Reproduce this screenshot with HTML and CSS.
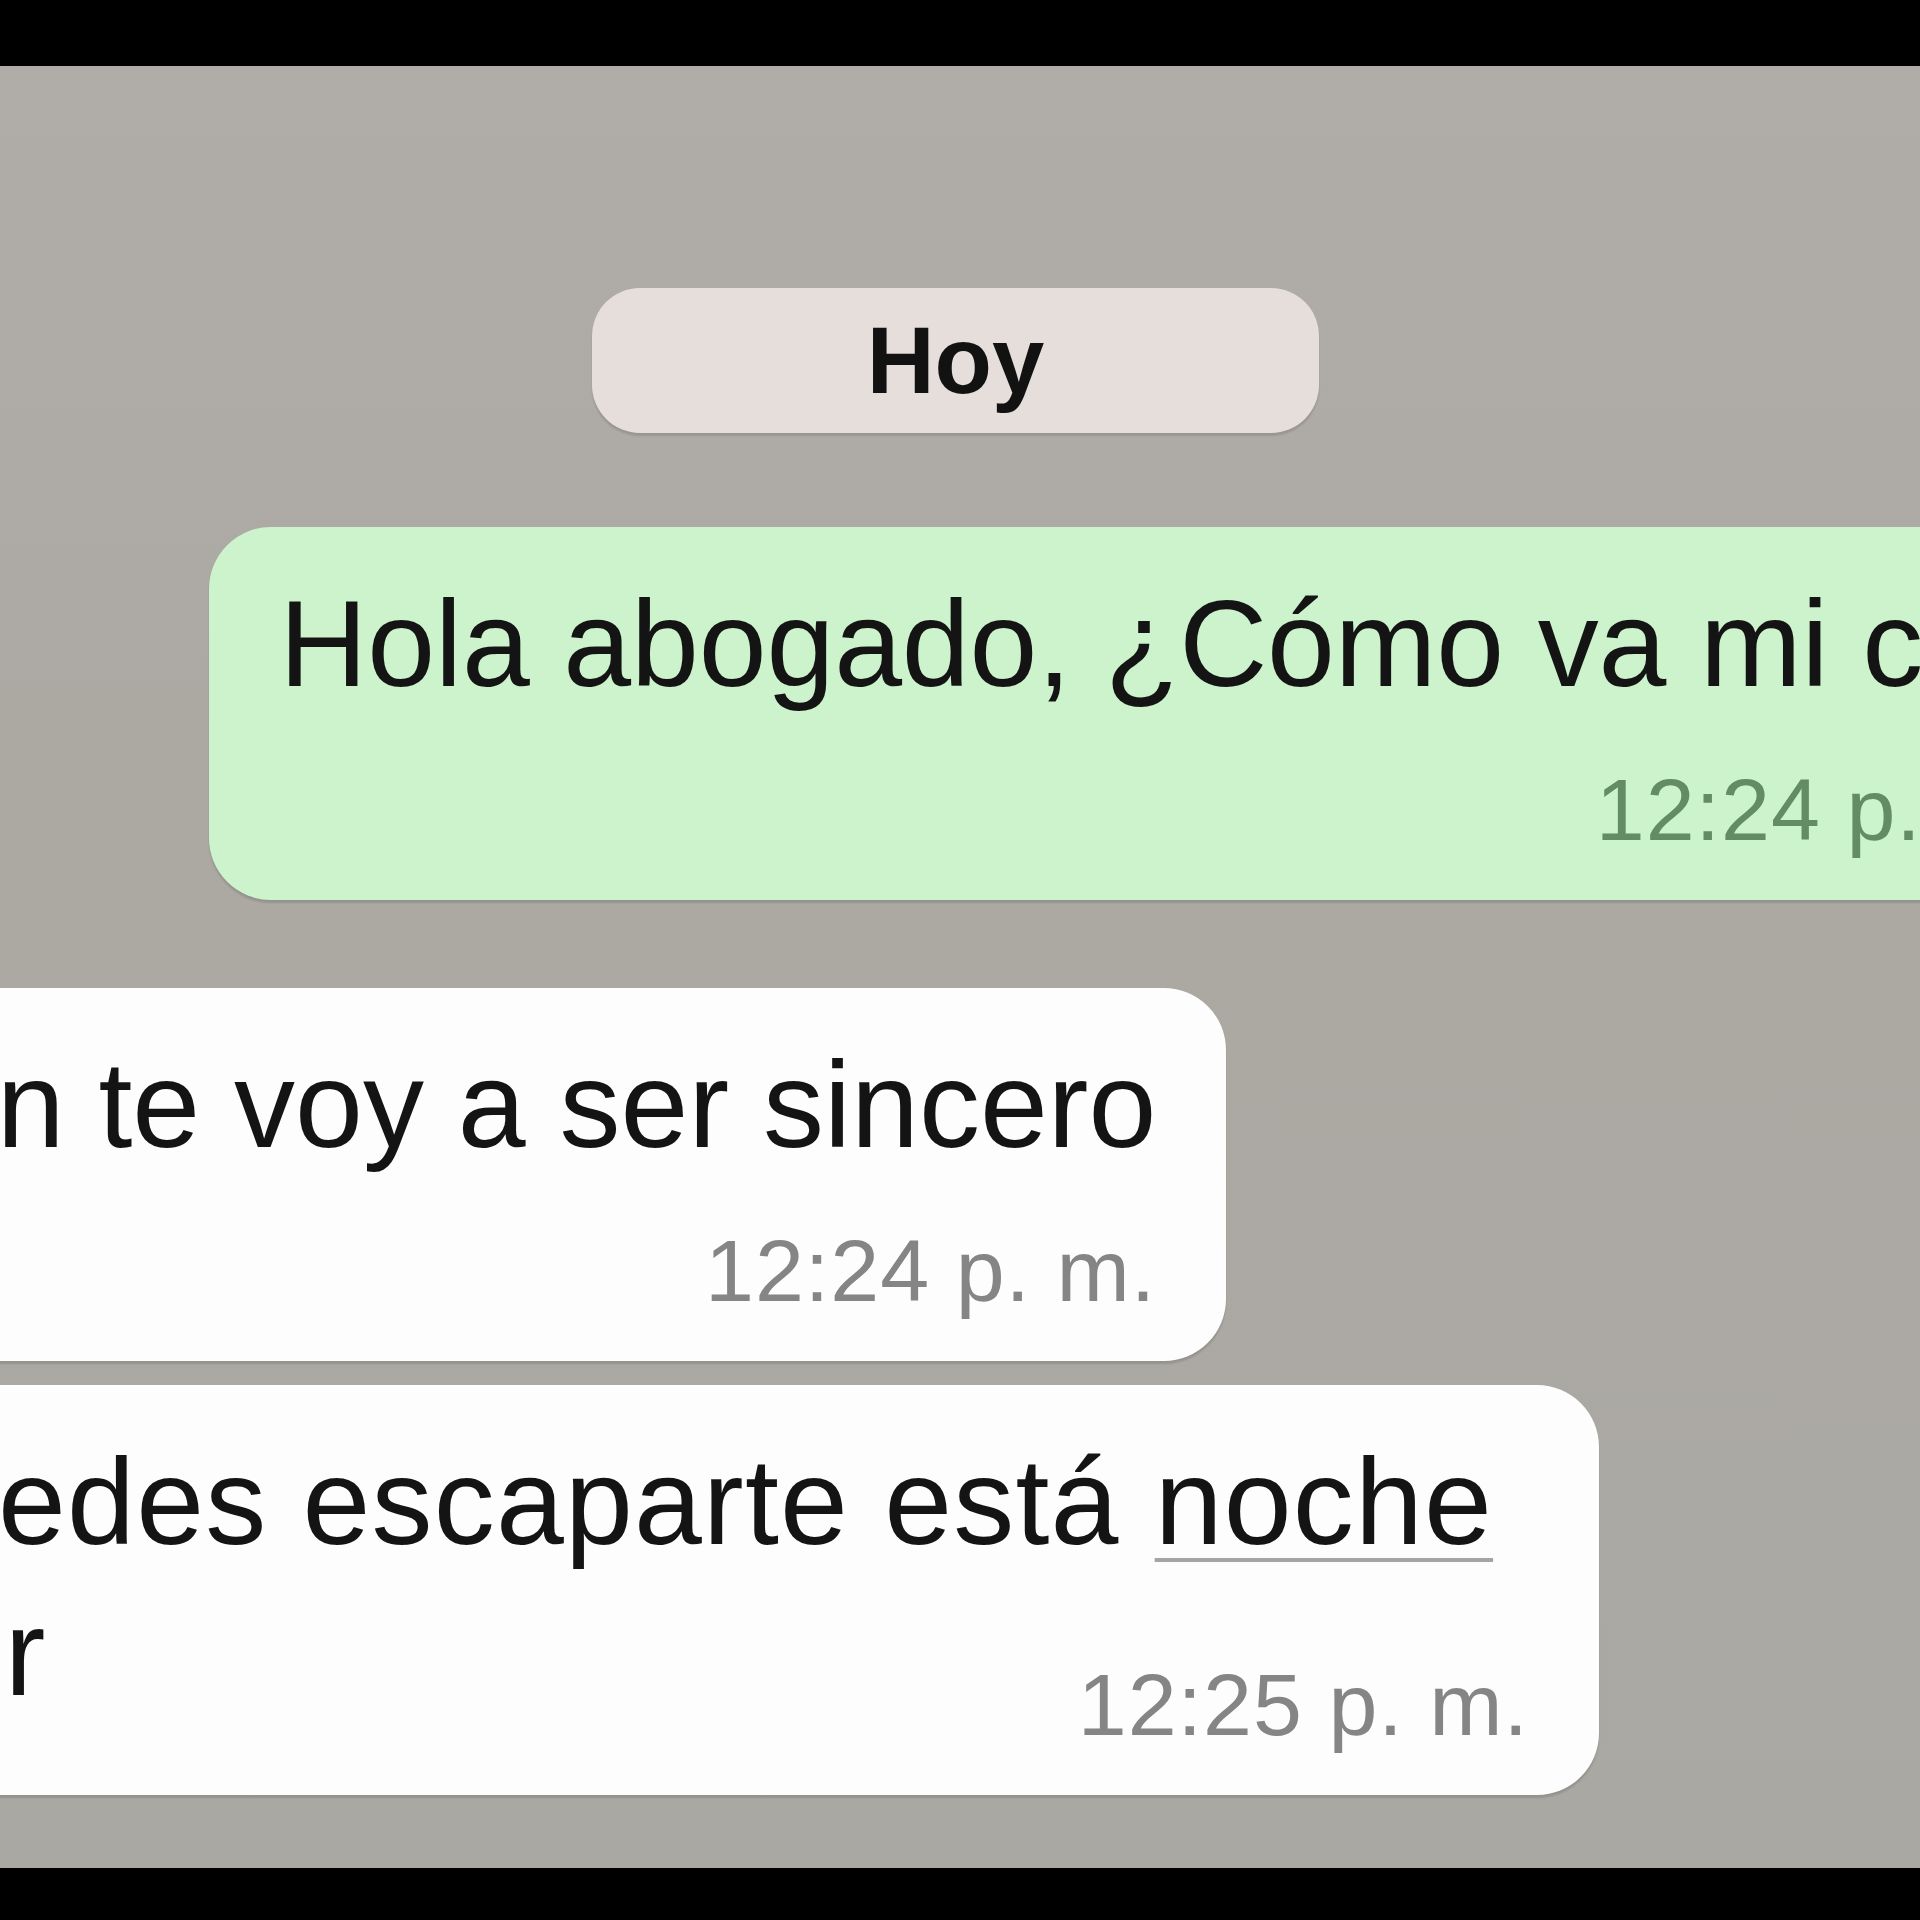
FILE: index.html
```html
<!DOCTYPE html>
<html lang="es">
<head>
    <meta charset="UTF-8">
    <meta name="viewport" content="width=device-width, initial-scale=1.0">
    <title>Chat</title>
    <link rel="stylesheet" href="styles.css">
</head>
<body>
    <div class="bar"></div>

    <main class="chat-area">
        <div class="chat">
            <div class="day-pill">Hoy</div>

            <div class="bubble out">
                <p class="msg">Hola abogado, ¿Cómo va mi caso?</p>
                <div class="meta">12:24 p. m.<svg class="checks" viewBox="0 0 62 40" aria-hidden="true"><path d="M3 22 L14 33 L38 5" /><path d="M26 30 L29 33 L58 5" /></svg></div>
            </div>

            <div class="bubble in first">
                <p class="msg">Joven te voy a ser sincero</p>
                <div class="meta">12:24 p. m.</div>
            </div>

            <div class="bubble in second">
                <p class="msg">Si puedes escaparte está <span class="link">noche</span> volver</p>
                <div class="meta same-line">12:25 p. m.</div>
            </div>
        </div>
    </main>

    <div class="bar bottom"></div>
</body>
</html>
```

FILE: styles.css
```css
body {
    margin: 0;
    background-color: #000;
    font-family: 'Liberation Sans', Arial, sans-serif;
    color: #141414;
    overflow: hidden;
}
.bar {
    height: 66px;
    background-color: #000;
}
.bar.bottom {
    height: 52px;
}
.chat-area {
    height: 1802px;
    overflow: hidden;
    background: linear-gradient(180deg, #b0ada9 0%, #aca9a3 40%, #aaa8a2 100%);
}
/* the phone screen is wider than the picture, so the chat runs off both sides */
.chat {
    display: flex;
    flex-direction: column;
    margin-left: -331px;
    margin-right: -322px;
    padding-top: 222px;
}
.day-pill {
    align-self: center;
    width: 727px;
    height: 145px;
    line-height: 145px;
    text-align: center;
    font-size: 94px;
    font-weight: 700;
    color: #121212;
    background-color: #e5deda;
    border-radius: 48px;
    box-shadow: 0 3px 2px rgba(0, 0, 0, 0.12);
    margin-bottom: 94px;
}
.bubble {
    padding: 42px 70px 40px 70px;
    border-radius: 62px;
    box-shadow: 0 3px 2px rgba(0, 0, 0, 0.13);
    max-width: 1790px;
}
.bubble.out {
    align-self: flex-end;
    background-color: #ccf3cb;
    white-space: nowrap;
    max-width: none;
    padding-right: 55px;
    margin-bottom: 88px;
}
.bubble.out .msg {
    letter-spacing: -0.15px;
}
.bubble.in {
    align-self: flex-start;
    background-color: #fdfdfd;
}
.bubble.in.first {
    margin-bottom: 24px;
}
.bubble.in.second {
    margin-left: -25px;
    max-width: 1815px;
}
.bubble.in.second .msg {
    letter-spacing: 1.2px;
}
.msg {
    margin: 0;
    font-size: 122px;
    line-height: 151px;
}
.link {
    text-decoration: underline;
    text-decoration-color: #a4a4a4;
    text-decoration-thickness: 4px;
    text-underline-offset: 14px;
}
.meta {
    margin-top: 40px;
    font-size: 88px;
    line-height: 100px;
    letter-spacing: 1px;
    text-align: right;
    color: #858585;
}
.bubble.out .meta {
    color: #638c64;
}
.meta.same-line {
    margin-top: -74px;
}
.checks {
    width: 124px;
    height: 80px;
    margin-left: 16px;
    vertical-align: -6px;
    fill: none;
    stroke: #4fb3e8;
    stroke-width: 5;
    stroke-linecap: round;
    stroke-linejoin: round;
}
```
